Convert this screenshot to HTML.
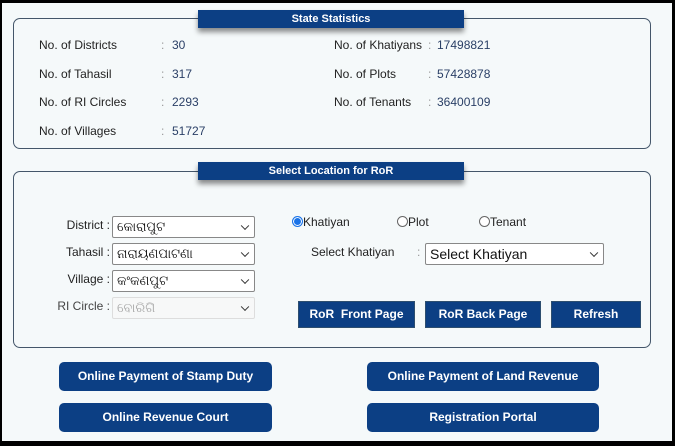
<!DOCTYPE html><html><head><meta charset="utf-8"><style>
body{margin:0;width:675px;height:446px;background:#000;position:relative;overflow:hidden;font-family:"Liberation Sans",Arial,sans-serif;}
.pg{position:absolute;left:2px;top:3px;width:670px;height:438px;background:#f5f9fa;}
.a{position:absolute;}
.box{position:absolute;border:1px solid #44566a;border-radius:7px;}
.hd{position:absolute;background:#0c3f84;color:#fff;font-weight:bold;font-size:11px;text-align:center;line-height:18px;box-shadow:0 4px 5px rgba(0,0,0,.45);}
.t{position:absolute;font-size:12px;color:#222;}
.v{position:absolute;font-size:12px;color:#2a3f66;}
.c{position:absolute;font-size:12px;color:#999;}
.sel{position:absolute;border:1px solid #888;border-radius:2px;background:#fff;font-family:"Liberation Sans","Noto Sans",sans-serif;font-size:13px;color:#111;padding-left:4px;box-sizing:border-box;}
.sel:after{content:"";position:absolute;right:6px;top:50%;width:5px;height:5px;border-right:1.5px solid #333;border-bottom:1.5px solid #333;transform:translateY(-70%) rotate(45deg);}
.bt{position:absolute;background:#0c3f84;color:#fff;font-weight:bold;font-size:12px;text-align:center;border:1px solid #2d4e6f;box-sizing:border-box;}
.bb{position:absolute;background:#0c3f84;color:#fff;font-weight:bold;font-size:12px;text-align:center;border-radius:5px;line-height:29px;}
.rad{position:absolute;width:9px;height:9px;border:1px solid #666;border-radius:50%;background:#fff;}
</style></head><body><div class="pg"></div>
<div class="box" style="left:13px;top:18px;width:636px;height:129px"></div>
<div class="hd" style="left:198px;top:10px;width:266px">State Statistics</div>
<div class="t" style="left:39px;top:38px">No. of Districts</div><div class="c" style="left:161px;top:38px">:</div><div class="v" style="left:172px;top:38px">30</div>
<div class="t" style="left:39px;top:67px">No. of Tahasil</div><div class="c" style="left:161px;top:67px">:</div><div class="v" style="left:172px;top:67px">317</div>
<div class="t" style="left:39px;top:95px">No. of RI Circles</div><div class="c" style="left:161px;top:95px">:</div><div class="v" style="left:172px;top:95px">2293</div>
<div class="t" style="left:39px;top:124px">No. of Villages</div><div class="c" style="left:161px;top:124px">:</div><div class="v" style="left:172px;top:124px">51727</div>
<div class="t" style="left:334px;top:38px">No. of Khatiyans</div><div class="c" style="left:428px;top:38px">:</div><div class="v" style="left:437px;top:38px">17498821</div>
<div class="t" style="left:334px;top:67px">No. of Plots</div><div class="c" style="left:428px;top:67px">:</div><div class="v" style="left:437px;top:67px">57428878</div>
<div class="t" style="left:334px;top:95px">No. of Tenants</div><div class="c" style="left:428px;top:95px">:</div><div class="v" style="left:437px;top:95px">36400109</div>
<div class="box" style="left:13px;top:171px;width:636px;height:175px"></div>
<div class="hd" style="left:198px;top:162px;width:266px">Select Location for RoR</div>
<div class="t" style="left:40px;top:218px;width:70px;text-align:right">District :</div>
<div class="t" style="left:40px;top:245px;width:70px;text-align:right">Tahasil :</div>
<div class="t" style="left:40px;top:272px;width:70px;text-align:right">Village :</div>
<div class="t" style="left:40px;top:299px;width:70px;text-align:right;color:#444">RI Circle :</div>
<div class="sel" style="left:112px;top:216px;width:143px;height:22px;line-height:20px">କୋରାପୁଟ</div>
<div class="sel" style="left:112px;top:243px;width:143px;height:22px;line-height:20px">ନାରାୟଣପାଟଣା</div>
<div class="sel" style="left:112px;top:270px;width:143px;height:22px;line-height:20px">କଂକଣପୁଟ</div>
<div class="sel" style="left:112px;top:297px;width:143px;height:22px;line-height:20px;border-color:#ddd;color:#aaa;background:#f7f8f8">ବୋରିଗି</div>
<div class="rad" style="left:292px;top:216px;background:#1a73e8;border-color:#1a73e8;box-shadow:inset 0 0 0 1px #fff"></div><div class="t" style="left:303px;top:215px">Khatiyan</div>
<div class="rad" style="left:397px;top:216px"></div><div class="t" style="left:408px;top:215px">Plot</div>
<div class="rad" style="left:479px;top:216px"></div><div class="t" style="left:490px;top:215px">Tenant</div>
<div class="t" style="left:311px;top:245px">Select Khatiyan</div><div class="c" style="left:417px;top:245px">:</div>
<div class="sel" style="left:425px;top:243px;width:179px;height:22px;line-height:20px;font-size:14px">Select Khatiyan</div>
<div class="bt" style="left:298px;top:301px;width:117px;height:27px;line-height:25px">RoR&nbsp; Front Page</div>
<div class="bt" style="left:425px;top:301px;width:116px;height:27px;line-height:25px">RoR Back Page</div>
<div class="bt" style="left:551px;top:301px;width:90px;height:27px;line-height:25px">Refresh</div>
<div class="bb" style="left:59px;top:362px;width:213px">Online Payment of Stamp Duty</div>
<div class="bb" style="left:367px;top:362px;width:232px">Online Payment of Land Revenue</div>
<div class="bb" style="left:59px;top:403px;width:213px">Online Revenue Court</div>
<div class="bb" style="left:367px;top:403px;width:232px">Registration Portal</div>
</body></html>
